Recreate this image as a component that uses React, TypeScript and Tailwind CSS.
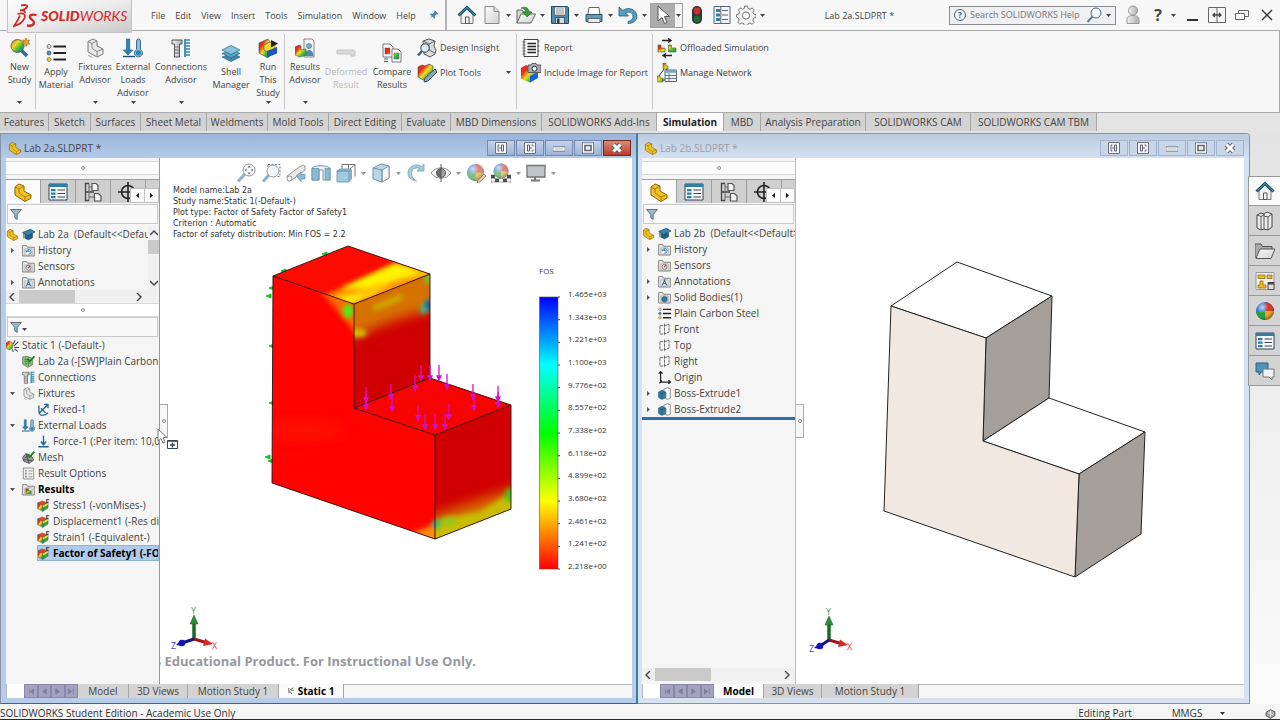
import React from "react";
import { clsx } from "clsx";

// All small drawings share a 20x20 box
const glyphs: Record<string, React.ReactNode> = {
  home: (
    <>
      <path d="M4 10v8.500h12V10L10 4z" fill="#f2f2f2" stroke="#777" />
      <path d="M8.500 12h3.500v6.500H8.500z" fill="#fff" stroke="#555" />
      <path d="M1.500 10.500 10 2.500l8.500 8" fill="none" stroke="#1d4f6d" strokeWidth="3" />
      <path d="M2 10 10 2.500l8 7.500" fill="none" stroke="#4b9cc0" strokeWidth="1" />
    </>
  ),
  newDoc: (
    <>
      <path d="M3 1.500h9l5 5v12H3z" fill="url(#paper)" stroke="#888" />
      <path d="M12 1.500v5h5" fill="#ddd" stroke="#888" />
    </>
  ),
  open: (
    <>
      <path d="M1 18V5h5l1.500 2H15v3" fill="#d5d5d5" stroke="#666" />
      <path d="M1 18 5 9h14.500L15 18z" fill="url(#paper)" stroke="#666" />
      <path d="M5 3c5-2 8 0 8 4h3l-5 5-4.500-5H9.500C9.500 4.500 8 3.500 5 3z" fill="#3f9b3c" stroke="#1f6a22" strokeWidth=".6" />
    </>
  ),
  save: (
    <>
      <path d="M1.500 1.500h16l1 1v16h-17z" fill="#4c8cae" stroke="#204a63" />
      <path d="M4.500 2h11v8h-11z" fill="#f4f4f4" stroke="#456" strokeWidth=".6" />
      <path d="M6 4h8M6 6h8M6 8h8" stroke="#999" />
      <path d="M5.500 12.500h9v6h-9z" fill="#d9d9d9" stroke="#234" strokeWidth=".7" />
      <path d="M7 13.500h2.500v5H7z" fill="#2c3c4a" />
    </>
  ),
  print: (
    <>
      <path d="M5 2.500h10l1 7H4z" fill="#fff" stroke="#666" />
      <path d="M2 9.500h16v7H2z" fill="#5b9cc0" stroke="#27536e" />
      <path d="M4 13.500h12v4H4z" fill="#eee" stroke="#666" />
    </>
  ),
  undo: (
    <path d="M1 2v9h9.500L7.500 8c3.500-2 7-.5 7.500 3 .4 3-2 5-5 5.500v2c5 0 9-3 9-7.500C18.500 5 11 1 5 5.500z" fill="#5a9dc3" stroke="#225d80" strokeWidth=".8" />
  ),
  arrow: <path d="M5 1v15l4-3.500 2.500 6 2.500-1-2.500-6h5z" fill="#fff" stroke="#555" />,
  traffic: (
    <>
      <rect x="5" y="1" width="10" height="18" rx="5" fill="#2e3434" />
      <circle cx="10" cy="6" r="3.400" fill="#c9302a" />
      <circle cx="10" cy="14" r="3.400" fill="#1f6d35" />
    </>
  ),
  options: (
    <>
      <path d="M2 1.500h16v17H2z" fill="#f3f5f6" stroke="#567" />
      <path d="M4 4h4v3H4zM4 8.500h4v3H4zM4 13h4v3H4z" fill="#327ea8" />
      <path d="M10 5.500h6M10 10h6M10 14.500h6M8.800 1.500v17" stroke="#666" />
    </>
  ),
  gear: (
    <>
      <path d="M8.500 1h3l.6 2.400 2 .8 2.100-1.300 2 2.100-1.300 2.100.8 1.900 2.300.7v2.800l-2.400.6-.8 2 1.400 2.100-2.100 2.100-2.100-1.300-2 .8-.6 2.200h-3l-.6-2.300-1.900-.8-2.100 1.300-2-2.100 1.300-2.100-.8-2L.5 12V9.500L2.800 9l.8-2-1.300-2.100 2-2 2.100 1.300 2-.8z" fill="#f2f2f2" stroke="#777" />
      <circle cx="10" cy="10.500" r="3.600" fill="#fafafa" stroke="#777" />
    </>
  ),
  user: (
    <>
      <path d="M4 18.500V15c0-3 2-4.500 6-4.500s6 1.500 6 4.500v3.500z" fill="url(#metal)" stroke="#999" />
      <circle cx="10" cy="5.500" r="4.500" fill="url(#metal)" stroke="#999" />
    </>
  ),
  pin: <path d="m12 1 7 7-2 1-2-.5-3.500 3.500.5 4-1.500 1.500L6.500 13 1 19l4.500-7L2 8.500 3.500 7l4 .5L11 4l-.5-2z" fill="#3f86b2" />,
  newStudy: (
    <>
      <path d="m11 12 6 6" stroke="#2f6f97" strokeWidth="3.500" />
      <circle cx="7.500" cy="8" r="6.500" fill="url(#rainbow)" stroke="#666" />
      <path d="m16 0 .8 2.500L19.500 2 18 4.200l1.800 2-2.600-.1L16 8.500l-1-2.400-2.600.1 1.600-2L12.500 2l2.700.5z" fill="#f6a81c" stroke="#b0610a" strokeWidth=".7" />
    </>
  ),
  material: (
    <>
      <circle cx="3" cy="3.500" r="2" fill="#ddd" stroke="#666" strokeWidth=".8" />
      <circle cx="3" cy="10" r="2" fill="#3e9ad0" stroke="#456" strokeWidth=".8" />
      <circle cx="3" cy="16.500" r="2" fill="#f1c232" stroke="#876" strokeWidth=".8" />
      <path d="M7.500 3.500H20M7.500 10H20M7.500 16.500H20" stroke="#222" strokeWidth="2" />
    </>
  ),
  fixtures: (
    <>
      <path d="M3 3.500 8 1l4 2v5l6 3v5l-6 3-9-5z" fill="#e9e9e9" stroke="#777" />
      <path d="m3 3.500 4 2v5l5 3v5.500M7 5.500 12 3M12 13.500l6-2.500" fill="none" stroke="#888" />
      <path d="m3 17 4 2.500" stroke="#999" />
    </>
  ),
  loads: (
    <>
      <path d="M3.500 1h3.200v11h3.100L5 17 .5 12h3z" fill="#2d83b4" stroke="#1b5475" strokeWidth=".6" />
      <path d="M0 18.500h12" stroke="#1b5475" strokeWidth="1.400" />
      <path d="M13.500 3a2 2 0 0 1 4 0v8.500a4 4 0 1 1-4 0z" fill="#8fbdd6" stroke="#3f6f8c" />
      <circle cx="15.500" cy="14.800" r="2.600" fill="#2d83b4" />
    </>
  ),
  connections: (
    <>
      <path d="M1 2h10v4H8.500v13h-5V6H1z" fill="url(#metal)" stroke="#555" />
      <path d="M3.500 9h5M3.500 12h5M3.500 15h5" stroke="#777" />
      <path d="M14 1v18M14 2h5M14 5h5M14 8h5M14 11h5M14 14h5M14 17h5" stroke="#2c86b5" strokeWidth="1.700" />
    </>
  ),
  shell: (
    <>
      <path d="m1 14 9 4.500 9-4.500-7-3.500z" fill="#3d8bb0" stroke="#2a617d" strokeWidth=".7" />
      <path d="m1 10.500 9 4.500 9-4.500-7-3.500z" fill="#58a5c8" stroke="#2a617d" strokeWidth=".7" />
      <path d="m1 7 9 4.500L19 7l-9-4.500z" fill="#86c4de" stroke="#2a617d" strokeWidth=".7" />
    </>
  ),
  run: (
    <>
      <path d="M1 5 10 1l2 3-6 3v5l5 2v5l-2 .5L1 15z" fill="url(#bands)" stroke="#444" strokeWidth=".6" />
      <path d="m6 7 6-3 5 3v5l-6 3-5-3z" fill="#f1dc2a" stroke="#444" strokeWidth=".5" />
      <path d="m9 13 10-4v6.500L9 19.500z" fill="#1a56c8" />
      <path d="m13 2 7 3.500-7 4z" fill="#222" />
    </>
  ),
  results: (
    <>
      <path d="M9 1h8l2 2v16H9z" fill="#f1f1f1" stroke="#888" />
      <circle cx="14" cy="8" r="2.500" fill="#7fb0cc" stroke="#35627e" strokeWidth=".6" />
      <path d="M10 18c0-4 2-6 4-6s4.500 2 4.500 6z" fill="#4a8db4" />
      <path d="m0 9 4-2 2 1v4l5-1v6l-6 2-5-2z" fill="url(#bands)" stroke="#555" strokeWidth=".6" />
    </>
  ),
  deformed: <path d="M1 7h15c3 0 3 2 3 3v3h-4v-2H1z" fill="#dadada" stroke="#c3c3c3" />,
  compare: (
    <>
      <path d="M1 1h7l3 3v10H1z" fill="#fff" stroke="#777" />
      <path d="M10 6h6l3 3v10h-9z" fill="#fff" stroke="#777" />
      <path d="M3 5h5v6H3zM12 10h5v6h-5z" fill="url(#bands)" stroke="#555" strokeWidth=".5" />
      <path d="M2 16h4M2 18.500h4" stroke="#357" strokeWidth="1.200" />
    </>
  ),
  insight: (
    <>
      <path d="m6 3 6-2 6 2-1 5 2 4-1 4-5 3-6-3z" fill="#d6dbe0" stroke="#555" />
      <path d="m6 3 6 3 6-3M12 6v6l6 3" fill="none" stroke="#666" />
      <circle cx="8" cy="10" r="4.200" fill="#dfeaf1" stroke="#345" />
      <path d="m5 13-4 4.500" stroke="#34607c" strokeWidth="2.400" />
    </>
  ),
  plot: (
    <>
      <path d="m1 4 4-2 3 1 4-2 4 2v5l-5 3-1 5-4 1-5-3z" fill="url(#bands)" stroke="#444" strokeWidth=".6" />
      <path d="m18 6 2 3-9 9-4 1 1-4z" fill="#8ba5b6" stroke="#3c5160" />
    </>
  ),
  report: (
    <>
      <path d="M3 1.500h14v17H3z" fill="#fafafa" stroke="#444" />
      <path d="M6.500 5.500H15M6.500 8.500H15M6.500 11.500H15M6.500 14.500H15" stroke="#222" strokeWidth="1.400" />
      <path d="M1.500 4h3M1.500 7h3M1.500 10h3M1.500 13h3M1.500 16h3M16 3h2.500M16 8h2.500M16 13h2.500" stroke="#666" />
    </>
  ),
  includeImage: (
    <>
      <path d="m0 5 5-3 3 2v5l8 1v5l-7 4.500L0 16z" fill="url(#bands)" />
      <path d="m9 13 8-4v6l-8 4.500z" fill="#1763dd" />
      <path d="M7 2h3l1-1.500h4L16 2h4v7.500H7z" fill="#a7abad" stroke="#444" strokeWidth=".8" />
      <circle cx="13.500" cy="5.700" r="2.500" fill="#e4edf2" stroke="#333" />
    </>
  ),
  offload: (
    <>
      <path d="M5 2.500h9M11 .5l3 2-3 2M15 17.500H6M9 15.500l-3 2 3 2" fill="none" stroke="#222" strokeWidth="1.400" />
      <path d="M1 7h3v3h4v4H1zM11.500 7h3v3H19v4h-7.500z" fill="url(#bands)" stroke="#363" strokeWidth=".6" />
    </>
  ),
  network: (
    <>
      <path d="M6 0h3v3h2v3H6zM0 13h3v2h3v4H0z" fill="url(#bands)" stroke="#363" strokeWidth=".5" />
      <path d="M7 6 2 13M9 6l2 2M5 17h3" stroke="#333" />
      <path d="M8 7h11.500v11.500H8z" fill="#f4f4f4" stroke="#567" />
      <path d="M8 7h11.500v2.800H8z" fill="#7aa3bd" />
      <path d="M8 12.500h11.500M8 15.500h11.500M12 10v8.500" stroke="#678" />
    </>
  ),
  part: (
    <>
      <path d="M2 5 6 2l5 2v5l7 4v3l-6 3.500L2 13z" fill="#f3c322" stroke="#8a6508" />
      <path d="m2 5 4 2v4l6 4 6-2.500M6 7l5-3M12 15v4" fill="none" stroke="#a67c0d" />
    </>
  ),
  property: (
    <>
      <path d="M1 2h18v16H1z" fill="#f6f8f9" stroke="#345" />
      <path d="M1 2h18v3H1zM3 7h4.500v2.300H3zM3 10.500h4.500v2.300H3zM3 14h4.500v2.300H3z" fill="#2f7ea8" />
      <path d="M9.500 8H17M9.500 11.500H17M9.500 15H17" stroke="#444" />
    </>
  ),
  config: (
    <>
      <path d="M6 1.500H2.500v17H6M2.500 10H11" fill="none" stroke="#444" strokeWidth="1.300" />
      <path d="M9 1.500h4l2 2v5H9zM11.500 11.500h4l2.500 2.500v5h-6.500z" fill="#f4f4f4" stroke="#555" strokeWidth="1.200" />
      <path d="M6 1.500v17M6 5h3M6 15h5" stroke="#666" />
    </>
  ),
  target: (
    <>
      <circle cx="10" cy="10" r="6.500" fill="none" stroke="#222" strokeWidth="1.600" />
      <path d="M10 0v20M0 10h20" stroke="#222" strokeWidth="1.600" />
    </>
  ),
  filter: <path d="M1 2.500h18L12 11v8l-4-2.500V11z" fill="#8fbcd3" stroke="#444" strokeWidth="1.200" />,
  cap: (
    <>
      <path d="m1 7 12-5 7 4-11 6z" fill="#3585b3" stroke="#153d56" />
      <path d="M5 10v6l5 2 6-3V9l-7 3z" fill="#245f85" stroke="#153d56" />
      <path d="M3 8v8" stroke="#153d56" strokeWidth="1.400" />
    </>
  ),
  folder: (
    <>
      <path d="M1 18.500V2.500h6l1.500 2.500H19v13.500z" fill="#eee" stroke="#666" strokeWidth="1.200" />
      <path d="M4.500 7.500h11v9.500h-11z" fill="#fff" stroke="#888" />
    </>
  ),
  planeFig: (
    <path d="M8 4H3v13h5M10 1v18M10 4l7-2v12l-7 3" fill="none" stroke="#555" strokeWidth="1.300" strokeDasharray="5 1" />
  ),
  origin: <path d="M4 1v16h16M1 4l3-3 3 3M16 14l3 3-3 3M2 19l4-4" fill="none" stroke="#222" strokeWidth="1.900" />,
  boss: (
    <>
      <path d="m9 3 6-2 4 2v14l-4 2-5-2z" fill="#f5f5f5" stroke="#666" />
      <path d="m1 8 5-3 6 3v8l-6 3-5-3z" fill="#3580a8" stroke="#1c4a64" />
      <path d="m1 8 5 2.500L12 8M6 10.500V19" stroke="#1c4a64" fill="none" />
    </>
  ),
  study: (
    <>
      <path d="m0 6 5-3 5 3v8l-5 3-5-3z" fill="url(#bands)" stroke="#444" strokeWidth=".7" />
      <path d="m12 11 7-7M11 8l3-6M13 13h7M13 15l5 4M10 16l1 4" stroke="#345" strokeWidth="1.600" />
    </>
  ),
  solidCheck: (
    <>
      <path d="m1 3 6-1 9 3v10l-7 4-8-5z" fill="#94c58c" stroke="#3e6a3a" />
      <path d="M3 7h9M3 10h9M4 13h9M6 3v13M10 3v15" stroke="#4c8545" />
      <path d="m8 6 4 4 7-8" fill="none" stroke="#1b7f22" strokeWidth="2.800" />
    </>
  ),
  mesh: (
    <>
      <path d="m1 10 5-6 8 3 4 7-7 5-8-3z" fill="#9a9f9f" stroke="#333" />
      <path d="m4 10 10-2M6 4l5 15M2 13l14 2" stroke="#333" />
      <path d="m8 5 4 4 7-8" fill="none" stroke="#1b7f22" strokeWidth="2.800" />
    </>
  ),
  fixed: <path d="M3 4v10c0 3 3 5 6 5s6-2 8-4M4 15 17 2M11 2h6v6M6 8l7 7" fill="none" stroke="#24678f" strokeWidth="2" />,
  force: <path d="M10 1v13M6 10l4 5 4-5M2 18h16" fill="none" stroke="#24678f" strokeWidth="2.200" />,
  resultOptions: (
    <>
      <path d="M2 1.500h16v17H2z" fill="#eee" stroke="#666" />
      <path d="M4.500 4.500h3v2.500h-3zM4.500 9h3v2.500h-3zM4.500 13.500h3V16h-3z" fill="#999" />
      <path d="M10 6h6M10 10.500h6M10 15h6" stroke="#777" />
    </>
  ),
  plotItem: (
    <>
      <path d="m1 6 7-3 9 3-8 4z" fill="#e0452b" stroke="#444" strokeWidth=".7" />
      <path d="m1 6 8 4v9l-8-4z" fill="url(#bands)" stroke="#444" strokeWidth=".7" />
      <path d="m9 10 8-4v8l-8 5z" fill="#35a83a" stroke="#444" strokeWidth=".7" />
      <path d="m9 10 8-4v3l-8 4z" fill="#eedc2a" />
      <path d="M14 1h5M15 1v4h3" fill="none" stroke="#333" strokeWidth="1.400" />
    </>
  ),
  zoomFit: (
    <>
      <circle cx="13" cy="7" r="6" fill="#f4f8fa" stroke="#777" />
      <path d="M13 2.500 11.500 4.500h3zM13 11.500 11.500 9.500h3zM8.500 7l2-1.500v3zM17.500 7l-2-1.500v3z" fill="#444" />
      <path d="m9 11-7 7.500" stroke="#6da2c0" strokeWidth="3.200" />
    </>
  ),
  zoomArea: (
    <>
      <path d="M7 1.500h12v12H7z" fill="none" stroke="#555" strokeDasharray="2 1.500" />
      <circle cx="12" cy="8" r="6" fill="#f0f5f8" stroke="#888" />
      <path d="m8 12-6 6.500" stroke="#6da2c0" strokeWidth="3.200" />
    </>
  ),
  prevView: (
    <>
      <path d="m1 13 11-8 5-3 2 1v4L6 17l-4 1z" fill="#e4e4e4" stroke="#777" />
      <circle cx="3.500" cy="15.500" r="2.500" fill="#fff" stroke="#777" />
      <path d="m10 13 5-4v2.500h4V16h-4v2.500z" fill="#6faccb" stroke="#3a7495" strokeWidth=".7" />
    </>
  ),
  section: (
    <>
      <path d="M1 5c3-3 15-3 18 0v12H12V7H8v10H1z" fill="#e7eef2" stroke="#55798c" />
      <path d="M1 5.500h7V17H1zM14 5.500h5V17h-5z" fill="#6ea9c8" stroke="#3f7392" strokeWidth=".7" />
    </>
  ),
  orient: (
    <>
      <path d="M6 1.500h13v12M6 1.500V7M19 1.500 14 6M12.500 1v5" fill="none" stroke="#555" />
      <path d="m1 8 3-2h11l-2 2zM1 8h12v11H1z" fill="#8bbdd6" stroke="#3f7696" strokeWidth=".8" />
      <path d="m13 8 3-2v10l-3 3z" fill="#5d9dbc" />
    </>
  ),
  display: (
    <>
      <path d="m2 5 8-4 8 2v12l-7 4-9-3z" fill="#a9cfe1" stroke="#4b7b95" />
      <path d="m11 7 7-4v12l-7 4z" fill="#f3f3f3" stroke="#777" />
      <path d="m2 5 9 2v12" fill="none" stroke="#4b7b95" />
    </>
  ),
  rotate: <path d="M18 1v7h-7l2.500-2.500C9 3.500 5 7 5.500 11c.3 3 2 5 5 7C5 17.500 2 14 2 10 2 3.500 9.500-.5 15.500 3.500z" fill="#8fc0d7" stroke="#4d8ba9" strokeWidth=".8" />,
  eye: (
    <>
      <path d="M0 10c5-7 15-7 20 0-5 7-15 7-20 0z" fill="#eee" stroke="#777" />
      <circle cx="10" cy="10" r="4.500" fill="#8c8c8c" stroke="#333" />
      <path d="M10 5.500a4.500 4.500 0 0 0 0 9z" fill="#444" />
      <path d="M10 1v18" stroke="#333" />
    </>
  ),
  appearance: (
    <>
      <circle cx="9.500" cy="9.500" r="8.500" fill="#4a86cc" />
      <path d="M9.500 1A8.500 8.500 0 0 1 18 9.500H9.500z" fill="#dc5d54" />
      <path d="M1 9.500h8.500V18A8.500 8.500 0 0 1 1 9.500z" fill="#52b564" />
      <path d="M9.500 9.500H18A8.500 8.500 0 0 1 9.500 18z" fill="#f0ae4c" />
      <circle cx="9.500" cy="9.500" r="8.500" fill="url(#shine)" />
      <path d="m18 11 2 2-6 6-3 1 1-3z" fill="#e2c08a" stroke="#5b4a33" strokeWidth=".7" />
    </>
  ),
  scene: (
    <>
      <path d="M0 12h20v7H0z" fill="#fff" stroke="#333" strokeWidth=".6" />
      <path d="M0 12h4v3.500H0zM8 12h4v3.500H8zM16 12h4v3.500h-4zM4 15.500h4V19H4zM12 15.500h4V19h-4z" fill="#222" />
      <circle cx="10" cy="8" r="7.500" fill="#4a86cc" />
      <path d="M10 .5A7.500 7.500 0 0 1 17.500 8H10z" fill="#dc5d54" />
      <path d="M2.500 8H10v7.500A7.500 7.500 0 0 1 2.500 8z" fill="#52b564" />
      <path d="M10 8h7.500a7.500 7.500 0 0 1-7.500 7.500z" fill="#f0ae4c" />
      <circle cx="10" cy="8" r="7.500" fill="url(#shine)" />
    </>
  ),
  monitor: (
    <>
      <path d="M1 2.500h18v11.500H1z" fill="#aeb6bb" stroke="#555" strokeWidth="1.300" />
      <path d="M9 14v3M5 17.500h9" stroke="#555" strokeWidth="2" />
    </>
  ),
  library: (
    <>
      <path d="m2 4 4-2 3 1 3-2 5 2v13l-4 3-4-1-3 1-4-2z" fill="#eee" stroke="#444" />
      <path d="m2 4 4 1.500V19M6 5.500 9 4M9 3v15M9 5l4 1v13M13 6l4-3" fill="none" stroke="#555" />
    </>
  ),
  explorer: (
    <>
      <path d="M0 17V3h6l1.500 2.500H17V9" fill="#aaa" stroke="#555" />
      <path d="M1 17.500 5 8h15l-4 9.500z" fill="url(#paper)" stroke="#555" />
    </>
  ),
  palette: (
    <>
      <path d="M1 1.500h18v17H1z" fill="#eee" stroke="#999" />
      <path d="M3 4h7v3.500H3zM12 4h5v3.500h-5zM5 10h3v4h3v3H3v-3h2z" fill="#f0b923" stroke="#8a6508" strokeWidth=".7" />
      <path d="M13 11.500h6v7h-6z" fill="#ddd" stroke="#555" />
      <path d="M13 11h6v2.500h-6z" fill="#444" />
    </>
  ),
  ball: (
    <>
      <circle cx="10" cy="10" r="9" fill="#2f6fd0" />
      <path d="M10 1a9 9 0 0 1 9 9h-9z" fill="#d9301f" />
      <path d="M1 10h9v9a9 9 0 0 1-9-9z" fill="#1f9b33" />
      <path d="M10 10h9a9 9 0 0 1-9 9z" fill="#f3a31a" />
      <circle cx="10" cy="10" r="9" fill="url(#shine)" />
    </>
  ),
  forum: (
    <>
      <path d="M1 2h12v9H6l-2 3v-3H1z" fill="#4d94bb" stroke="#27617f" />
      <path d="M8 8h11v8h-2v3l-3-3H8z" fill="#f1f1f1" stroke="#777" />
    </>
  ),
  tag: (
    <>
      <path d="m2 8 8-5 8 4v7l-8 5-8-5z" fill="#aaa" stroke="#444" strokeWidth="1.500" />
      <path d="m6 8 8 4M10 5v11" stroke="#eee" strokeWidth="1.500" />
    </>
  ),
};

function Icon({ name, className = "size-5" }: { name: string; className?: string }) {
  return (
    <svg viewBox="0 0 20 20" className={clsx("shrink-0", className)} aria-hidden="true">
      {glyphs[name]}
    </svg>
  );
}

// Folder with a mark inside it, used by the feature tree
function FolderIcon({ mark }: { mark: string }) {
  return (
    <svg viewBox="0 0 20 20" className="size-[13px] shrink-0" aria-hidden="true">
      {glyphs.folder}
      {mark === "history" && <path d="M7 12a3.500 3.500 0 1 1 3 3.500M10 9.500V12h2.500M6 10l1 2.500 2-1.500" fill="none" stroke="#2f7ea8" strokeWidth="1.400" />}
      {mark === "sensor" && (
        <>
          <circle cx="10" cy="12" r="3.800" fill="none" stroke="#555" strokeWidth="1.200" />
          <path d="m9 13 3-3.500" stroke="#c22" strokeWidth="1.800" />
        </>
      )}
      {mark === "note" && <path d="m6.500 16 3.500-8 3.500 8M8 13.500h4.500" fill="none" stroke="#24678f" strokeWidth="1.700" />}
      {mark === "body" && <path d="m6 10 4-2 4 2v5l-4 2-4-2z" fill="#2f7ea8" stroke="#1c4a64" />}
      {mark === "result" && <path d="M6 9h4v3h4v4H6z" fill="url(#bands)" stroke="#363" />}
    </svg>
  );
}

function Caret({ className }: { className?: string }) {
  return (
    <svg viewBox="0 0 5 3" className={clsx("h-[3px] w-[5px] shrink-0", className)} aria-hidden="true">
      <path d="M0 0h5L2.500 3z" fill="currentColor" />
    </svg>
  );
}

function Gradients() {
  return (
    <svg className="absolute size-0" aria-hidden="true">
      <defs>
        <linearGradient id="rainbow" x1="0" y1="0" x2="1" y2="1">
          <stop offset="0" stopColor="#e8331c" />
          <stop offset=".35" stopColor="#f6dc1e" />
          <stop offset=".65" stopColor="#35b83c" />
          <stop offset="1" stopColor="#2a66cf" />
        </linearGradient>
        <linearGradient id="bands" x1="0" y1="0" x2="1" y2="1">
          <stop offset="0" stopColor="#d92417" />
          <stop offset=".3" stopColor="#e8331c" />
          <stop offset=".5" stopColor="#f6dc1e" />
          <stop offset=".75" stopColor="#35b83c" />
          <stop offset="1" stopColor="#1e9a58" />
        </linearGradient>
        <linearGradient id="paper" x1="0" y1="0" x2="1" y2="1">
          <stop offset="0" stopColor="#fff" />
          <stop offset="1" stopColor="#cfcfcf" />
        </linearGradient>
        <linearGradient id="metal" x1="0" y1="0" x2="1" y2="0">
          <stop offset="0" stopColor="#f2f2f2" />
          <stop offset="1" stopColor="#adadad" />
        </linearGradient>
        <radialGradient id="shine" cx=".35" cy=".3" r=".7">
          <stop offset="0" stopColor="#fff" stopOpacity=".7" />
          <stop offset=".5" stopColor="#fff" stopOpacity="0" />
          <stop offset="1" stopColor="#000" stopOpacity=".35" />
        </radialGradient>
      </defs>
    </svg>
  );
}

const menus = ["File", "Edit", "View", "Insert", "Tools", "Simulation", "Window", "Help"];

const quickTools = [
  { icon: "newDoc", label: "New" },
  { icon: "open", label: "Open" },
  { icon: "save", label: "Save" },
  { icon: "print", label: "Print" },
  { icon: "undo", label: "Undo" },
];

function TitleBar() {
  return (
    <header className="relative flex h-[31px] shrink-0 items-center border-b border-[#a9a9a9] bg-[#f7f7f7] text-[9px] text-[#444]">
      <div className="z-10 ml-[7px] flex h-[33px] w-[125px] shrink-0 items-center gap-1 self-start border border-t-0 border-[#c4c4c4] bg-gradient-to-br from-[#fdfdfd] via-[#ececec] to-[#c9c9c9] pl-[5px]">
        <svg viewBox="0 0 24 24" className="h-6 w-6 shrink-0 text-[#cf2a27]" fill="none" stroke="currentColor" strokeWidth="1.800" aria-hidden="true">
          <path d="M8 1.500c4-1 7-.5 6 1.500-1 1.500-3.500 3-7 3.500 4-.5 5.500.5 4.500 2.500" />
          <path d="M4.500 10c5-1.500 8.500-.5 7 4C10 18 5.500 21 1 22c1.500-2 4-6 6-10.500" />
          <path d="M23.500 11c-4-1-7.500 0-6.500 2.500.8 2 4.500 3 4 5.500-.5 2.500-4 3-7 2.500" strokeWidth="2.300" />
        </svg>
        <span className="font-['Lato',sans-serif] text-[14px] whitespace-nowrap text-[#cf2a27]">
          <b className="font-black italic">SOLID</b>
          <i className="font-normal">WORKS</i>
        </span>
      </div>
      <nav className="ml-[19px] flex gap-2.5 pt-0.5">
        {menus.map((m) => (
          <button key={m} type="button">
            {m}
          </button>
        ))}
      </nav>
      <button type="button" aria-label="Pin menu" className="ml-[13px]">
        <Icon name="pin" className="size-2.5" />
      </button>
      <div className="ml-1.5 h-[30px] w-0.5 bg-[#b5b5b5]" />
      <button type="button" aria-label="Home" className="ml-2.5">
        <Icon name="home" />
      </button>
      <div className="ml-[5px] flex items-center">
        {quickTools.map((t) => (
          <button key={t.icon} type="button" aria-label={t.label} className="flex items-center">
            <Icon name={t.icon} />
            <span className="flex w-[14px] justify-center">
              <Caret />
            </span>
          </button>
        ))}
      </div>
      <button type="button" aria-label="Select" className="-ml-0.5 flex h-[25px] items-center border border-[#a0a0a0] bg-[#f4f4f4]">
        <span className="flex h-full w-6 items-center justify-center bg-[#acacac]">
          <Icon name="arrow" />
        </span>
        <span className="flex w-[7px] justify-center">
          <Caret />
        </span>
      </button>
      <button type="button" aria-label="Rebuild" className="ml-1">
        <Icon name="traffic" />
      </button>
      <button type="button" aria-label="File properties" className="ml-[5px]">
        <Icon name="options" />
      </button>
      <button type="button" aria-label="Options" className="ml-1 flex items-center">
        <Icon name="gear" />
        <span className="flex w-[14px] justify-center">
          <Caret />
        </span>
      </button>
      <div className="flex-1 pt-0.5 text-center">Lab 2a.SLDPRT *</div>
      <label className="flex h-[19px] w-[167px] shrink-0 items-center gap-1 border border-[#8c8c8c] bg-[#eef0f4] px-1">
        <span className="flex size-3 shrink-0 items-center justify-center rounded-full border border-[#3f6b88] text-[8px] font-bold text-[#2d5f80]">?</span>
        <input aria-label="Search help" placeholder="Search SOLIDWORKS Help" className="min-w-0 flex-1 bg-transparent text-[9px] outline-none placeholder:text-[#777]" />
        <svg viewBox="0 0 16 16" className="size-4 shrink-0" aria-hidden="true">
          <circle cx="10" cy="6" r="5" fill="#f6fafd" stroke="#3f6b88" />
          <path d="m6.500 9.500-5 5.500" stroke="#5a83a0" strokeWidth="2" />
        </svg>
        <Caret />
      </label>
      <button type="button" aria-label="Sign in" className="flex w-[34px] justify-center">
        <Icon name="user" />
      </button>
      <button type="button" className="w-4 text-center text-base font-bold">
        ?
      </button>
      <span className="flex w-[14px] justify-center">
        <Caret />
      </span>
      <button type="button" aria-label="Minimize" className="flex w-6 justify-center pt-2.5">
        <span className="h-0.5 w-[11px] bg-[#333]" />
      </button>
      <button type="button" aria-label="Span displays" className="flex w-[26px] justify-center">
        <svg viewBox="0 0 18 16" className="h-4 w-[18px]" fill="none" stroke="#444">
          <path d="M.5.500h17v15H.500zM9 1v14" stroke="#666" />
          <path d="M5 8h8M7 6 5 8l2 2M11 6l2 2-2 2" strokeWidth="1.300" />
        </svg>
      </button>
      <button type="button" aria-label="Restore" className="flex w-6 justify-center">
        <svg viewBox="0 0 14 12" className="h-3 w-3.5" fill="none" stroke="#666">
          <path d="M.5 4.500h9v6h-9zM3.500 4V1.500h10v6H10" />
        </svg>
      </button>
      <button type="button" aria-label="Close" className="flex w-[26px] justify-center">
        <svg viewBox="0 0 12 12" className="size-3" stroke="#333" strokeWidth="1.400">
          <path d="m1 1 10 10M11 1 1 11" />
        </svg>
      </button>
    </header>
  );
}

interface RibbonButtonProps {
  icon: string;
  label: string;
  width: string;
  menu?: boolean;
  disabled?: boolean;
}

function RibbonButton({ icon, label, width, menu, disabled }: RibbonButtonProps) {
  return (
    <button
      type="button"
      disabled={disabled}
      className={clsx("flex h-full shrink-0 flex-col items-center gap-0.5", menu ? "pt-[7px]" : "pt-3", disabled && "text-[#b9b9b9]", width)}
    >
      <Icon name={icon} />
      <span className="leading-[13px] whitespace-pre-line">{label}</span>
      {menu && <Caret className="mt-auto mb-2" />}
    </button>
  );
}

function RibbonRow({ icon, label, menu }: { icon: string; label: string; menu?: boolean }) {
  return (
    <button type="button" className="flex h-[25px] w-full items-center gap-[3px]">
      <Icon name={icon} />
      <span className="whitespace-nowrap">{label}</span>
      {menu && <Caret className="mr-[5px] ml-auto" />}
    </button>
  );
}

function Ribbon() {
  return (
    <div className="flex h-[82px] shrink-0 border-r border-b border-[#a9a9a9] bg-[#f6f6f6] text-[9px] text-[#444]">
      <div className="flex pl-1">
        <RibbonButton icon="newStudy" label={"New\nStudy"} width="w-[31px]" menu />
      </div>
      <div className="my-[3px] w-px bg-[#c8c8c8]" />
      <div className="flex">
        <RibbonButton icon="material" label={"Apply\nMaterial"} width="w-10" />
        <RibbonButton icon="fixtures" label={"Fixtures\nAdvisor"} width="w-[38px]" menu />
        <RibbonButton icon="loads" label={"External\nLoads\nAdvisor"} width="w-[38px]" menu />
        <RibbonButton icon="connections" label={"Connections\nAdvisor"} width="w-[58px]" menu />
        <RibbonButton icon="shell" label={"Shell\nManager"} width="w-[42px]" />
        <RibbonButton icon="run" label={"Run\nThis\nStudy"} width="w-8" menu />
      </div>
      <div className="my-[3px] w-px bg-[#c8c8c8]" />
      <div className="flex">
        <RibbonButton icon="results" label={"Results\nAdvisor"} width="w-10" menu />
        <RibbonButton icon="deformed" label={"Deformed\nResult"} width="w-[42px]" disabled />
        <RibbonButton icon="compare" label={"Compare\nResults"} width="w-[50px]" />
      </div>
      <div className="w-[99px] pt-1">
        <RibbonRow icon="insight" label="Design Insight" />
        <RibbonRow icon="plot" label="Plot Tools" menu />
      </div>
      <div className="my-[3px] w-px bg-[#c8c8c8]" />
      <div className="w-[135px] pt-1 pl-1">
        <RibbonRow icon="report" label="Report" />
        <RibbonRow icon="includeImage" label="Include Image for Report" />
      </div>
      <div className="my-[3px] w-px bg-[#c8c8c8]" />
      <div className="pt-1 pl-1">
        <RibbonRow icon="offload" label="Offloaded Simulation" />
        <RibbonRow icon="network" label="Manage Network" />
      </div>
    </div>
  );
}

const ribbonTabs = [
  { label: "Features", width: "w-[49px]" },
  { label: "Sketch", width: "w-[42px]" },
  { label: "Surfaces", width: "w-[50px]" },
  { label: "Sheet Metal", width: "w-[66px]" },
  { label: "Weldments", width: "w-[61px]" },
  { label: "Mold Tools", width: "w-[61px]" },
  { label: "Direct Editing", width: "w-[73px]" },
  { label: "Evaluate", width: "w-[49px]" },
  { label: "MBD Dimensions", width: "w-[91px]" },
  { label: "SOLIDWORKS Add-Ins", width: "w-[115px]" },
  { label: "Simulation", width: "w-[67px]" },
  { label: "MBD", width: "w-[37px]" },
  { label: "Analysis Preparation", width: "w-[105px]" },
  { label: "SOLIDWORKS CAM", width: "w-[105px]" },
  { label: "SOLIDWORKS CAM TBM", width: "w-[126px]" },
];

function RibbonTabs() {
  return (
    <div className="flex h-[18px] shrink-0 bg-[#e4e4e4] text-[#444]">
      {ribbonTabs.map((t) => (
        <button
          key={t.label}
          type="button"
          className={clsx(
            "border-r border-[#a6a6a6] whitespace-nowrap",
            t.width,
            t.label === "Simulation" ? "bg-[#fafafa] font-bold text-[#222]" : "bg-[#d3d3d3]"
          )}
        >
          {t.label}
        </button>
      ))}
    </div>
  );
}

interface TreeNode {
  label: string;
  icon?: string;
  mark?: string;
  level: 0 | 1 | 2;
  arrow?: "open" | "closed";
  bold?: boolean;
  selected?: boolean;
}

const partTreeA: TreeNode[] = [
  { label: "History", mark: "history", level: 1, arrow: "closed" },
  { label: "Sensors", mark: "sensor", level: 1 },
  { label: "Annotations", mark: "note", level: 1, arrow: "closed" },
];

const partTreeB: TreeNode[] = [
  ...partTreeA,
  { label: "Solid Bodies(1)", mark: "body", level: 1, arrow: "closed" },
  { label: "Plain Carbon Steel", icon: "material", level: 1 },
  { label: "Front", icon: "planeFig", level: 1 },
  { label: "Top", icon: "planeFig", level: 1 },
  { label: "Right", icon: "planeFig", level: 1 },
  { label: "Origin", icon: "origin", level: 1 },
  { label: "Boss-Extrude1", icon: "boss", level: 1, arrow: "closed" },
  { label: "Boss-Extrude2", icon: "boss", level: 1, arrow: "closed" },
];

const studyTree: TreeNode[] = [
  { label: "Static 1 (-Default-)", icon: "study", level: 0 },
  { label: "Lab 2a (-[SW]Plain Carbon Steel-)", icon: "solidCheck", level: 1 },
  { label: "Connections", icon: "connections", level: 1 },
  { label: "Fixtures", icon: "fixtures", level: 1, arrow: "open" },
  { label: "Fixed-1", icon: "fixed", level: 2 },
  { label: "External Loads", icon: "loads", level: 1, arrow: "open" },
  { label: "Force-1 (:Per item: 10,000 N:)", icon: "force", level: 2 },
  { label: "Mesh", icon: "mesh", level: 1 },
  { label: "Result Options", icon: "resultOptions", level: 1 },
  { label: "Results", mark: "result", level: 1, arrow: "open", bold: true },
  { label: "Stress1 (-vonMises-)", icon: "plotItem", level: 2 },
  { label: "Displacement1 (-Res disp-)", icon: "plotItem", level: 2 },
  { label: "Strain1 (-Equivalent-)", icon: "plotItem", level: 2 },
  { label: "Factor of Safety1 (-FOS-)", icon: "plotItem", level: 2, bold: true, selected: true },
];

const indent = { 0: "pl-0", 1: "pl-4", 2: "pl-[31px]" };

function TreeRow({ node }: { node: TreeNode }) {
  return (
    <li className={clsx("relative flex h-4 items-center", indent[node.level])}>
      {node.arrow && (
        <span className={clsx("absolute left-1 text-[#555]", node.arrow === "closed" && "-rotate-90")}>
          <Caret />
        </span>
      )}
      <span
        className={clsx(
          "flex h-full min-w-0 flex-1 items-center gap-[3px] overflow-hidden whitespace-nowrap",
          node.selected && "bg-[#aecbea] outline outline-[#8fb2d8] -outline-offset-1",
          node.bold && "font-bold text-black"
        )}
      >
        {node.mark ? <FolderIcon mark={node.mark} /> : <Icon name={node.icon ?? ""} className="size-[13px]" />}
        {node.label}
      </span>
    </li>
  );
}

function TreeRoot({ name, config }: { name: string; config: string }) {
  return (
    <li className="flex h-4 items-center gap-[3px] overflow-hidden whitespace-nowrap">
      <Icon name="part" className="size-[13px]" />
      <Icon name="cap" className="size-[13px]" />
      {name}&nbsp; {config}
    </li>
  );
}

function Splitter() {
  return (
    <div className="flex h-3.5 shrink-0 items-center justify-center border-y border-[#d9d9d9] bg-white">
      <span className="size-1 rounded-full border border-[#999] bg-[#ddd]" />
    </div>
  );
}

function PanelTabs() {
  return (
    <div className="relative mt-1 flex h-6 shrink-0 overflow-hidden border-t border-[#9f9f9f] bg-[#cfcfcf]">
      {["part", "property", "config", "target"].map((icon, i) => (
        <button
          key={icon}
          type="button"
          aria-label={icon}
          className={clsx("flex h-full w-[35px] shrink-0 items-center justify-center border-r border-[#9f9f9f]", i === 0 && "bg-[#fafafa]")}
        >
          <Icon name={icon} />
        </button>
      ))}
      <div className="absolute right-0 bottom-0 flex h-[15px] text-[#111]">
        <button type="button" aria-label="Scroll tabs left" className="flex w-[15px] items-center justify-center border border-[#c0c0c0] bg-[#fbfbfb]">
          <Caret className="rotate-90" />
        </button>
        <button type="button" aria-label="Scroll tabs right" className="flex w-3.5 items-center justify-center border border-l-0 border-[#c0c0c0] bg-[#fbfbfb]">
          <Caret className="-rotate-90" />
        </button>
      </div>
    </div>
  );
}

function FilterBox({ id, menu }: { id: string; menu?: boolean }) {
  return (
    <label htmlFor={id} className="mx-px flex h-5 shrink-0 items-center border border-[#c9c9c9] bg-[#f9f9f9] pl-0.5">
      <Icon name="filter" className="size-3" />
      {menu && <Caret className="mt-1 h-0.5 w-1" />}
      <input id={id} aria-label="Filter" className="min-w-0 flex-1 bg-transparent outline-none" />
    </label>
  );
}

function Chevron({ d }: { d: string }) {
  return (
    <svg viewBox="0 0 8 8" className="size-2 shrink-0" fill="none" stroke="#444" strokeWidth="1.400" aria-hidden="true">
      <path d={d} />
    </svg>
  );
}

function HScroll({ corner }: { corner?: boolean }) {
  return (
    <div className={clsx("flex h-[13px] shrink-0 items-center bg-[#f0f0f0] pl-0.5", corner ? "pr-4" : "pr-1")}>
      <Chevron d="M6 0 2 4l4 4" />
      <div className="mr-auto ml-[3px] h-full w-14 bg-[#cacaca]" />
      <Chevron d="m2 0 4 4-4 4" />
    </div>
  );
}

const captionButtons = [
  { label: "Dock left", framed: true, d: "M4.500 3H3v6h1.500M6.500 3h2v6h-2zM5 5v2" },
  { label: "Dock right", framed: true, d: "M3.500 3h2v6h-2zM7.500 3H9v1.500M9 7.500V9H7.500M7 5v2" },
  { label: "Minimize", d: "M1 6h10v2H1z" },
  { label: "Maximize", d: "M1.500 2h9v8h-9zM4.500 5h3v2h-3z" },
  { label: "Close", d: "m2.500 2.500 7 7M9.500 2.500l-7 7" },
];

function CaptionButtons({ active }: { active?: boolean }) {
  return (
    <div className="ml-auto flex gap-px">
      {captionButtons.map(({ label, framed, d }) => {
        const close = label === "Close";
        return (
          <button
            key={label}
            type="button"
            aria-label={label}
            className={clsx(
              "flex h-4 w-7 items-center justify-center border",
              active && close
                ? "border-[#6e2a22] bg-gradient-to-b from-[#d98b7c] to-[#bb3a26]"
                : active
                ? "border-[#7489ad] bg-gradient-to-b from-[#c3d3ea] to-[#9db4d6]"
                : "border-[#a3b3cd] bg-[#c9d6e8]"
            )}
          >
            <svg viewBox="0 0 12 12" className="size-3" fill="none">
              {framed ? (
                <>
                  <path d="M.5.500h11v11H.500z" fill="#f6f6f6" stroke="#6a7082" />
                  <path d={d} stroke="#5a6072" />
                </>
              ) : (
                <>
                  <path d={d} stroke="#5a6072" strokeWidth={close ? 5 : 3} />
                  <path d={d} stroke="#fff" strokeWidth={close ? 3 : 1.400} />
                </>
              )}
            </svg>
          </button>
        );
      })}
    </div>
  );
}

function BottomTabs({ tabs, current }: { tabs: { label: string; width: string }[]; current: string }) {
  return (
    <div className="flex h-3.5 shrink-0 bg-[#f5f5f5] text-[#444]">
      <div className="w-[18px] border-l border-[#bbb] bg-white" />
      <div className="flex w-[54px] bg-[#a4a2be]">
        {["M8 1 4 4l4 3zM3 1v6", "M6 1 2 4l4 3z", "m2 1 4 3-4 3z", "m0 1 4 3-4 3zM6 1v6"].map((d) => (
          <button key={d} type="button" aria-label="Scroll sheets" className="flex flex-1 items-center justify-center border border-[#8a88a8]">
            <svg viewBox="0 0 8 8" className="size-[7px]" fill="#7f7d9e" stroke="#7f7d9e">
              <path d={d} />
            </svg>
          </button>
        ))}
      </div>
      {tabs.map((t) => (
        <button
          key={t.label}
          type="button"
          className={clsx(
            "flex items-center justify-center border-r border-[#a6a6a6] leading-[14px] whitespace-nowrap",
            t.width,
            t.label === current ? "bg-[#fafafa] font-bold text-black" : "bg-[#d3d3d3]"
          )}
        >
          {t.label === "Static 1" && (
            <svg viewBox="0 0 8 10" className="mr-1 h-2 w-1.5" fill="none" stroke="#444">
              <path d="M1 1v6l2-1 2 3M3 3l4-2M4 4h4" />
            </svg>
          )}
          {t.label}
        </button>
      ))}
      <div className="flex-1 border-t border-[#bbb]" />
    </div>
  );
}

function Triad({ x, y, zx, zy }: { x: number; y: number; zx: number; zy: number }) {
  return (
    <g transform={`translate(${x} ${y})`} fontSize="9">
      <path d="M0 0v-16" stroke="#176b20" strokeWidth="3.500" />
      <path d="M-4-15 0-24l4 9z" fill="#2a9136" stroke="#134e19" strokeWidth=".5" />
      <path d="m0 0 12 3.500" stroke="#a01616" strokeWidth="3" />
      <path d="m11-.5 8 5.500-10 2z" fill="#dc2626" />
      <path d={`M0 0 ${zx} ${zy}`} stroke="#161680" strokeWidth="3" />
      <circle cx={zx} cy={zy} r="3.300" fill="#1616b8" />
      <path d={`M${zx - 1} ${zy - 3}l-5 5 6 1z`} fill="#1616b8" />
      <text x="-3" y="-25" fill="#4b9b55">Y</text>
      <text x="18" y="10" fill="#e04a4a">X</text>
      <text x={zx - 11} y={zy + 6} fill="#4646b4">Z</text>
    </g>
  );
}

const legend = ["1.465e+03", "1.343e+03", "1.221e+03", "1.100e+03", "9.776e+02", "8.557e+02", "7.338e+02", "6.118e+02", "4.899e+02", "3.680e+02", "2.461e+02", "1.241e+02", "2.218e+00"];

const loadArrows = [
  [366, 402], [366, 409], [391, 399], [392, 411], [415, 390], [421, 380], [430, 380], [439, 380], [447, 389], [473, 399],
  [474, 410], [498, 401], [498, 407], [418, 420], [449, 419], [425, 429], [435, 429], [445, 429],
];

const fixtureMarks = [[284, 271], [325, 254], [272, 288], [269, 296], [272, 346], [272, 403], [268, 457], [271, 461]];

function SafetyPlot() {
  return (
    <svg className="absolute inset-0 size-full font-['Open_Sans',sans-serif]">
      <defs>
        <linearGradient id="fos" x1="0" y1="0" x2="0" y2="1">
          <stop offset="0" stopColor="#00f" />
          <stop offset=".25" stopColor="#0ff" />
          <stop offset=".5" stopColor="#0f0" />
          <stop offset=".75" stopColor="#ff0" />
          <stop offset="1" stopColor="#f00" />
        </linearGradient>
        <filter id="soft" x="-50%" y="-50%" width="200%" height="200%">
          <feGaussianBlur stdDeviation="6" />
        </filter>
        <filter id="soft2" x="-50%" y="-50%" width="200%" height="200%">
          <feGaussianBlur stdDeviation="2.500" />
        </filter>
        <clipPath id="faceTop"><path d="m273 276 75-30 82 28-76 30z" /></clipPath>
        <clipPath id="faceRiser"><path d="m354 304 76-30v104l-76 30z" /></clipPath>
        <clipPath id="faceSide"><path d="m435 435 76-30v104l-76 30z" /></clipPath>
        <clipPath id="faceFront"><path d="m273 276 81 28v104l81 27v104l-163-56z" /></clipPath>
      </defs>
      <g transform="translate(-160 -158)">
        {fixtureMarks.map(([x, y]) => (
          <path key={`${x}-${y}`} d={`M${x - 3} ${y}l5-2v4z`} fill="#19c22a" stroke="#19c22a" />
        ))}
        <g clipPath="url(#faceFront)">
          <path d="M265 240h180v310H265z" fill="#ff0300" />
          <ellipse cx="305" cy="430" rx="40" ry="10" fill="#ff2a00" opacity=".35" filter="url(#soft)" />
          <path d="m318 288 42 14v40l-10-16z" fill="#ff8000" opacity=".8" filter="url(#soft2)" />
          <ellipse cx="348" cy="311" rx="5" ry="7" fill="#3dfa14" filter="url(#soft2)" />
          <path d="m410 534 30-12v25z" fill="#ff8a10" filter="url(#soft2)" />
          <circle cx="436" cy="524" r="4" fill="#2bc8a0" filter="url(#soft2)" />
        </g>
        <g clipPath="url(#faceTop)">
          <path d="M265 240h180v70H265z" fill="#fc0b00" />
          <path d="m322 297 72-32 48 5-92 44z" fill="#ff9800" filter="url(#soft2)" />
          <path d="m340 289 56-26 36 11-20 2-22 6-18 12-24 10-12-6 20-4 10-6z" fill="#fff200" filter="url(#soft2)" />
          <path d="m356 293 24-9 8 1-24 10z" fill="#ffb000" filter="url(#soft2)" />
          <path d="m404 264 26 8-10 2z" fill="#ffa800" filter="url(#soft2)" />
        </g>
        <g clipPath="url(#faceRiser)">
          <path d="M350 270h90v145h-90z" fill="#d00000" />
          <path d="m345 296 92-32v44l-42 12-50 20z" fill="#d67200" filter="url(#soft)" />
          <path d="m372 306 26-11 8 1-8 6-24 9z" fill="#ceb800" opacity=".8" filter="url(#soft2)" />
          <ellipse cx="358" cy="333" rx="9" ry="4" fill="#cfc800" filter="url(#soft2)" />
          <ellipse cx="429" cy="278" rx="5" ry="6" fill="#72c81a" filter="url(#soft2)" />
          <ellipse cx="426" cy="307" rx="4" ry="8" transform="rotate(35 426 307)" fill="#2bc89a" filter="url(#soft2)" />
          <ellipse cx="429" cy="305" rx="3" ry="5" fill="#0a37b5" filter="url(#soft2)" />
        </g>
        <path d="m354 408 76-30 81 27-76 30z" fill="#f60400" />
        <g clipPath="url(#faceSide)">
          <path d="M430 400h90v145h-90z" fill="#d10000" />
          <path d="m430 516 90-30v40l-90 30z" fill="#d36a00" filter="url(#soft)" />
          <path d="m430 522 50-11 34-20v24l-84 32z" fill="#c9bc00" filter="url(#soft2)" />
          <ellipse cx="510" cy="495" rx="5" ry="7" fill="#3ec41f" filter="url(#soft2)" />
          <ellipse cx="449" cy="521" rx="8" ry="4" fill="#8ec81c" filter="url(#soft2)" />
          <circle cx="436" cy="524" r="4" fill="#1fb795" filter="url(#soft2)" />
        </g>
        <path d="m273 276 75-30 82 28v104l81 27v104l-76 30-163-56zM273 276l81 28 76-30M354 304v104l81 27 76-30M354 408l76-30M435 435v104" fill="none" stroke="#2b0d0d" strokeWidth=".9" />
        {loadArrows.map(([x, y]) => (
          <path key={`${x}-${y}`} d={`M${x} ${y - 15}v12M${x - 2} ${y - 4}h4l-2 4z`} fill="#a3179f" stroke="#d312cf" strokeWidth="1.300" />
        ))}
        <text x="539" y="274" fontSize="8" fill="#444">FOS</text>
        <rect x="539.500" y="297" width="18.500" height="272" fill="url(#fos)" stroke="#555" strokeWidth=".6" />
        {legend.map((v, i) => (
          <g key={v}>
            <path d={`M558 ${297 + i * 22.67}h2`} stroke="#444" />
            <text x="568" y={297 + i * 22.67} fontSize="8" fill="#333">
              {v}
            </text>
          </g>
        ))}
        <Triad x={194} y={639} zx={-12} zy={4} />
      </g>
    </svg>
  );
}

function SolidView() {
  return (
    <svg className="absolute inset-0 size-full font-['Open_Sans',sans-serif]">
      <g transform="translate(-796 -158)" stroke="#222" strokeWidth="1" strokeLinejoin="round">
        <path d="m891 306 66-44 95 34-66 42z" fill="#fff" />
        <path d="m986 338 66-42-3 102-66 43z" fill="#a59f9c" />
        <path d="m983 441 66-43 96 34-66 42z" fill="#fff" />
        <path d="m1079 474 66-42-4 102-66 43z" fill="#a59f9c" />
        <path d="m891 306 95 32-3 103 96 33-4 103-191-66z" fill="#f1e8e2" />
      </g>
      <g transform="translate(-796 -158)">
        <Triad x={829} y={640} zx={-9} zy={6} />
      </g>
    </svg>
  );
}

const viewTools = [
  { icon: "zoomFit" },
  { icon: "zoomArea" },
  { icon: "prevView" },
  { icon: "section" },
  { icon: "orient", menu: true },
  { icon: "display", menu: true },
  { icon: "rotate" },
  { icon: "eye", menu: true },
  { icon: "appearance" },
  { icon: "scene", menu: true },
  { icon: "monitor", menu: true },
];

function ViewToolbar() {
  return (
    <div className="relative flex justify-center gap-[5px] pt-[5px] opacity-80">
      {viewTools.map((t) => (
        <button key={t.icon} type="button" aria-label={t.icon} className="flex items-center text-[#777]">
          <Icon name={t.icon} />
          {t.menu && (
            <span className="flex w-2.5 justify-end">
              <Caret />
            </span>
          )}
        </button>
      ))}
    </div>
  );
}

function PanelHandle() {
  return (
    <div className="absolute top-1/2 left-0 flex h-[34px] w-2 -translate-y-1/2 items-center justify-center border border-l-0 border-[#aaa] bg-[#f7f7f7]">
      <span className="size-1 rounded-full border border-[#888]" />
    </div>
  );
}

function StudyWindow() {
  return (
    <section className="flex min-w-0 flex-col border-t border-r-2 border-b border-l border-[#8793a5] border-r-[#3b7f9b] border-b-[#3f6674] bg-[#b6cdea] pr-1 pb-[5px] pl-[5px]">
      <div className="-mr-1 -ml-[5px] flex h-6 shrink-0 items-center gap-0.5 bg-gradient-to-b from-[#9ab5da] to-[#b4cae8] pt-[3px] pr-[5px] pl-[7px]">
        <Icon name="part" className="size-3.5" />
        <h2>Lab 2a.SLDPRT *</h2>
        <CaptionButtons active />
      </div>
      <div className="flex min-h-0 flex-1">
        <aside className="flex w-[153px] shrink-0 flex-col bg-[#f5f5f5] pt-[3px]">
          <Splitter />
          <PanelTabs />
          <div className="mt-px flex flex-col">
            <FilterBox id="filter-a" />
          </div>
          <div className="mt-0.5 flex shrink-0">
            <ul className="min-w-0 flex-1">
              <TreeRoot name="Lab 2a" config="(Default<<Default>_Display State 1>)" />
              {partTreeA.map((n) => (
                <TreeRow key={n.label} node={n} />
              ))}
            </ul>
            <div className="flex w-[11px] flex-col items-center bg-[#f0f0f0] py-[3px]">
              <Chevron d="m0 6 4-4 4 4" />
              <div className="mt-[3px] h-3.5 w-full bg-[#cacaca]" />
              <div className="mt-auto flex">
                <Chevron d="m0 2 4 4 4-4" />
              </div>
            </div>
          </div>
          <HScroll corner />
          <Splitter />
          <FilterBox id="filter-study" menu />
          <ul className="flex-1">
            {studyTree.map((n) => (
              <TreeRow key={n.label} node={n} />
            ))}
          </ul>
        </aside>
        <div className="relative min-w-0 flex-1 border-l border-[#999] bg-white">
          <SafetyPlot />
          <ViewToolbar />
          <div className="relative pt-0.5 pl-[13px] text-[8px] leading-[11px] text-[#333] font-['DejaVu_Sans',sans-serif]">
            <p>Model name:Lab 2a</p>
            <p>Study name:Static 1(-Default-)</p>
            <p>Plot type: Factor of Safety Factor of Safety1</p>
            <p>Criterion : Automatic</p>
            <p>Factor of safety distribution: Min FOS = 2.2</p>
          </div>
          <p className="absolute bottom-[13px] left-0 flex w-[316px] justify-end overflow-hidden text-[13px] leading-5 font-bold whitespace-nowrap text-[#98989c]">
            SOLIDWORKS Educational Product. For Instructional Use Only.
          </p>
          <PanelHandle />
          {/* resize cursor over the panel edge */}
          <svg viewBox="0 0 22 24" className="absolute top-[270px] -left-1 h-6 w-[22px]" aria-hidden="true">
            <path d="M2 1v12l3-2.500 2 4.500 2-1-2-4.500h4z" fill="#fff" stroke="#777" />
            <path d="M11.500 12.500h10v8h-10z" fill="#fff" stroke="#345" />
            <path d="M11.500 13h10M14 17h5M16.500 14.500v5" stroke="#345" strokeWidth="1.400" />
          </svg>
        </div>
      </div>
      <BottomTabs
        current="Static 1"
        tabs={[
          { label: "Model", width: "w-[51px]" },
          { label: "3D Views", width: "w-[59px]" },
          { label: "Motion Study 1", width: "w-[91px]" },
          { label: "Static 1", width: "w-[65px]" },
        ]}
      />
    </section>
  );
}

function PartWindow() {
  return (
    <section className="flex min-w-0 flex-col rounded-tr border-t border-r border-b border-[#8793a5] bg-[#d7e2f0] pr-[5px] pb-[5px] pl-1">
      <div className="-mr-[5px] -ml-1 flex h-6 shrink-0 items-center gap-0.5 rounded-tr bg-gradient-to-b from-[#bccbe0] to-[#d3e0f0] pt-[3px] pr-[5px] pl-1.5 text-[#9aa0a8]">
        <Icon name="part" className="size-3.5" />
        <h2>Lab 2b.SLDPRT *</h2>
        <CaptionButtons />
      </div>
      <div className="flex min-h-0 flex-1">
        <aside className="flex w-[153px] shrink-0 flex-col bg-[#f5f5f5] pt-[3px]">
          <Splitter />
          <PanelTabs />
          <div className="mt-px flex flex-col">
            <FilterBox id="filter-b" />
          </div>
          <ul className="mt-px border-b-[3px] border-[#2f6fb0]">
            <TreeRoot name="Lab 2b" config="(Default<<Default>_Display State 1>)" />
            {partTreeB.map((n) => (
              <TreeRow key={n.label} node={n} />
            ))}
          </ul>
          <div className="flex-1" />
          <HScroll />
          <div className="h-[3px] shrink-0" />
        </aside>
        <div className="relative min-w-0 flex-1 border-l border-[#bbb] bg-white">
          <SolidView />
          <PanelHandle />
        </div>
      </div>
      <BottomTabs
        current="Model"
        tabs={[
          { label: "Model", width: "w-[50px]" },
          { label: "3D Views", width: "w-[58px]" },
          { label: "Motion Study 1", width: "w-[97px]" },
        ]}
      />
    </section>
  );
}

function TaskPane() {
  return (
    <aside className="z-10 -ml-0.5 w-8 shrink-0 pt-[43px]">
      {["home", "library", "explorer", "palette", "ball", "property", "forum"].map((icon, i) => (
        <button
          key={icon}
          type="button"
          aria-label={icon}
          className={clsx("flex h-[30px] w-full items-center justify-center border-b border-l border-[#999]", i === 0 ? "border-t bg-[#fafafa]" : "bg-[#d3d3d3]")}
        >
          <Icon name={icon} />
        </button>
      ))}
    </aside>
  );
}

function StatusBar() {
  return (
    <footer className="flex h-[15px] shrink-0 items-center bg-[#f5f5f5] pt-[3px] leading-3 whitespace-nowrap text-[#333]">
      <span>SOLIDWORKS Student Edition - Academic Use Only</span>
      <span className="ml-auto w-[58px] border-x border-[#ddd] text-center">Editing Part</span>
      <span className="ml-[28px] w-[50px] text-center">MMGS</span>
      <Caret className="ml-2" />
      <Icon name="tag" className="mr-1 ml-10 size-[11px]" />
    </footer>
  );
}

export default function App() {
  return (
    <div className="flex h-screen flex-col overflow-hidden bg-[#e8e8e8] font-['Open_Sans','Noto_Sans',sans-serif] text-[10px] leading-4 text-[#444]">
      <Gradients />
      <TitleBar />
      <Ribbon />
      <RibbonTabs />
      <main className="flex min-h-0 flex-1 bg-gradient-to-b from-[#e3e3e3] to-[#fbfbfb] pt-0.5">
        <div className="grid min-w-0 flex-1 grid-cols-[638fr_612fr]">
          <StudyWindow />
          <PartWindow />
        </div>
        <TaskPane />
      </main>
      <StatusBar />
      <div className="h-px shrink-0 bg-[#2a2a2e]" />
    </div>
  );
}
